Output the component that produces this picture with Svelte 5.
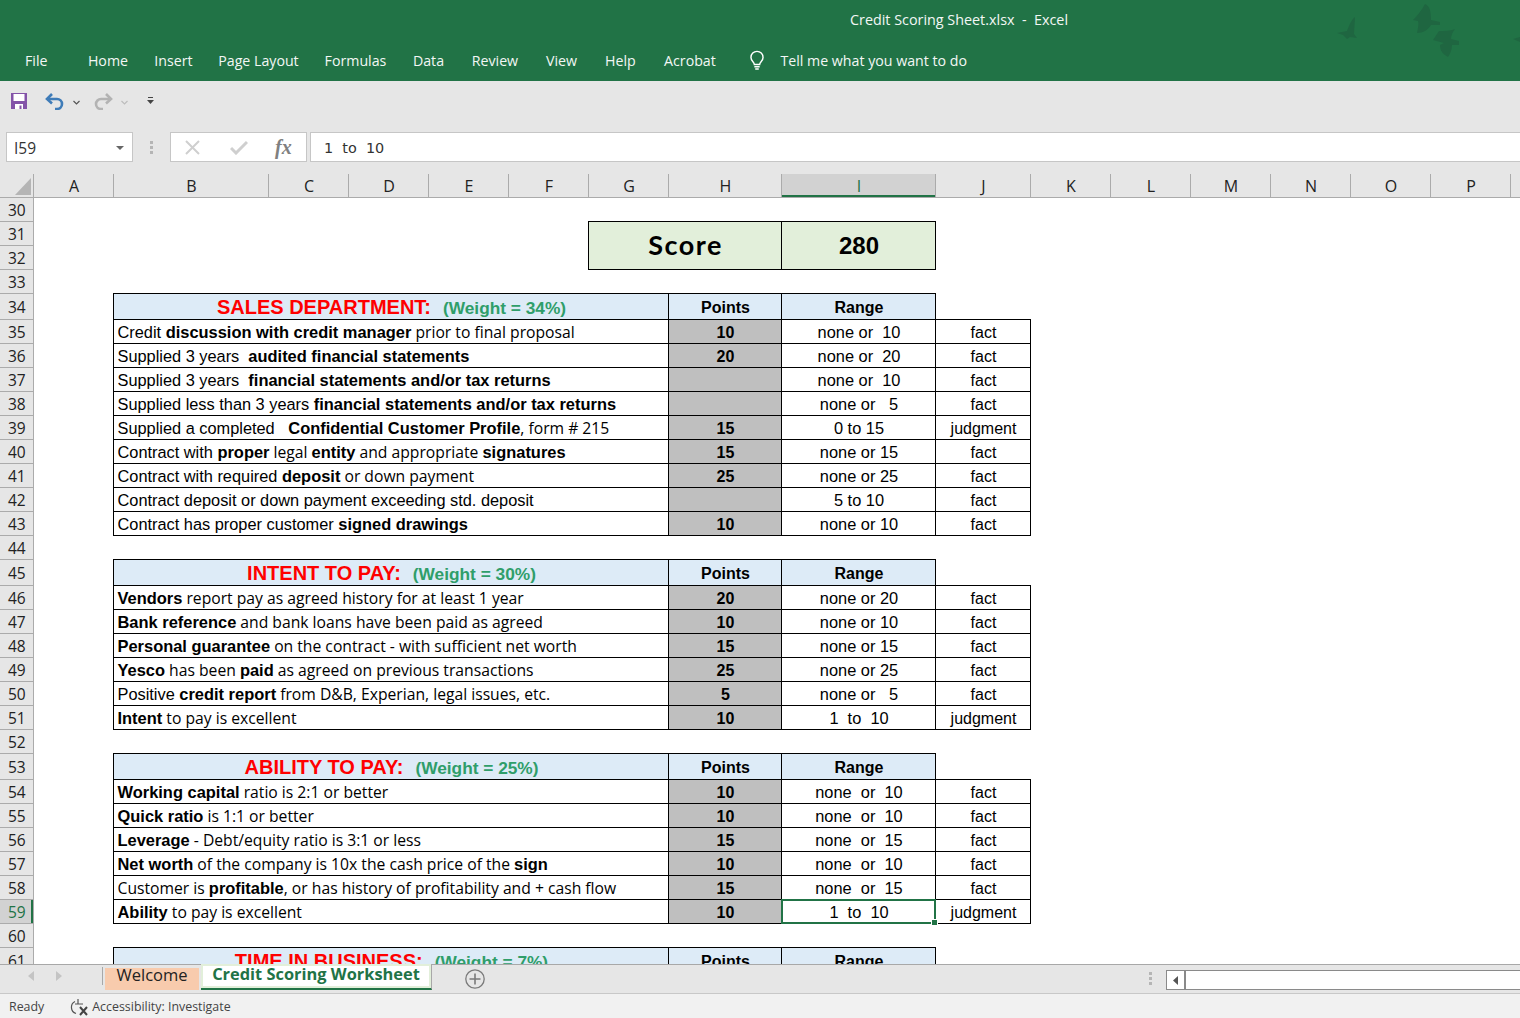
<script lang="ts">
	const ribbonTabs = [
		['Home', 41],
		['Insert', 36],
		['Page Layout', 80],
		['Formulas', 60],
		['Data', 32],
		['Review', 47],
		['View', 32],
		['Help', 32],
		['Acrobat', 53]
	];

	const colWidths = [33, 80, 155, 80, 80, 80, 80, 80, 113, 154, 95, 80, 80, 80, 80, 80, 80, 40];
	const colNames = ['A', 'B', 'C', 'D', 'E', 'F', 'G', 'H', 'I', 'J', 'K', 'L', 'M', 'N', 'O', 'P', ''];

	// a = Arial, b = Arial bold, t = the wider text face
	const sections = [
		{
			start: 34,
			title: 'SALES DEPARTMENT:',
			weight: '(Weight = 34%)',
			rows: [
				[[['a', 'Credit '], ['b', 'discussion with credit manager'], ['t', ' prior to final proposal']], '10', 'none or  10', 'fact'],
				[[['a', 'Supplied 3 years  '], ['b', 'audited financial statements']], '20', 'none or  20', 'fact'],
				[[['a', 'Supplied 3 years  '], ['b', 'financial statements and/or tax returns']], '', 'none or  10', 'fact'],
				[[['a', 'Supplied less than 3 years '], ['b', 'financial statements and/or tax returns']], '', 'none or   5', 'fact'],
				[[['a', 'Supplied a completed   '], ['b', 'Confidential Customer Profile'], ['t', ', form # 215']], '15', '0 to 15', 'judgment'],
				[[['a', 'Contract with '], ['b', 'proper'], ['t', ' legal '], ['b', 'entity'], ['t', ' and appropriate '], ['b', 'signatures']], '15', 'none or 15', 'fact'],
				[[['a', 'Contract with required '], ['b', 'deposit'], ['t', ' or down payment']], '25', 'none or 25', 'fact'],
				[[['a', 'Contract deposit or down payment exceeding std. deposit']], '', '5 to 10', 'fact'],
				[[['a', 'Contract has proper customer '], ['b', 'signed drawings']], '10', 'none or 10', 'fact']
			]
		},
		{
			start: 45,
			title: 'INTENT TO PAY:',
			weight: '(Weight = 30%)',
			rows: [
				[[['b', 'Vendors'], ['t', ' report pay as agreed history for at least 1 year']], '20', 'none or 20', 'fact'],
				[[['b', 'Bank reference'], ['t', ' and bank loans have been paid as agreed']], '10', 'none or 10', 'fact'],
				[[['b', 'Personal guarantee'], ['t', ' on the contract - with sufficient net worth']], '15', 'none or 15', 'fact'],
				[[['b', 'Yesco'], ['t', ' has been '], ['b', 'paid'], ['t', ' as agreed on previous transactions']], '25', 'none or 25', 'fact'],
				[[['a', 'Positive '], ['b', 'credit report'], ['t', ' from D&B, Experian, legal issues, etc.']], '5', 'none or   5', 'fact'],
				[[['b', 'Intent'], ['t', ' to pay is excellent']], '10', '1  to  10', 'judgment']
			]
		},
		{
			start: 53,
			title: 'ABILITY TO PAY:',
			weight: '(Weight = 25%)',
			rows: [
				[[['b', 'Working capital'], ['t', ' ratio is 2:1 or better']], '10', 'none  or  10', 'fact'],
				[[['b', 'Quick ratio'], ['t', ' is 1:1 or better']], '10', 'none  or  10', 'fact'],
				[[['b', 'Leverage'], ['t', ' - Debt/equity ratio is 3:1 or less']], '15', 'none  or  15', 'fact'],
				[[['b', 'Net worth'], ['t', ' of the company is 10x the cash price of the '], ['b', 'sign']], '10', 'none  or  10', 'fact'],
				[[['t', 'Customer is '], ['b', 'profitable'], ['t', ', or has history of profitability and + cash flow']], '15', 'none  or  15', 'fact'],
				[[['b', 'Ability'], ['t', ' to pay is excellent']], '10', '1  to  10', 'judgment']
			]
		}
	];

	const activeRow = 59;

	function headerOf(n: number) {
		return sections.find((s) => s.start === n);
	}
	function dataOf(n: number) {
		for (const s of sections) {
			const i = n - s.start - 1;
			if (i >= 0 && i < s.rows.length) return s.rows[i];
		}
		return null;
	}

	const rowNums = Array.from({ length: 32 }, (_, i) => 30 + i);
	const tallRows = [34, 45, 53, 61];
</script>

<div class="app">
	<header class="ribbon">
		<svg class="birds" width="200" height="60" viewBox="0 0 200 60">
			<g fill="#1f6641">
				<path d="M29 17C25 20 23 26 21 31L11 33l6 2 4 4 3-2 7 1-3-4z" />
				<path d="M99 4c5 2 6 8 6 16l9 2v3h-9c-3 5-8 8-14 8 1-5 2-9 1-12l-5-1c4-4 9-10 12-16z" />
				<path d="M113 31c5 0 11 0 16-2-3 4-4 7-4 10l8 2v4h-7c0 5-2 9-4 12-5-3-8-6-8-12l4-2-11-3z" />
				<path d="M187 39l7-2v5z" />
			</g>
		</svg>
		<div class="title">{'Credit Scoring Sheet.xlsx  -  Excel'}</div>
		<nav class="tabs">
			<span class="file">File</span>
			{#each ribbonTabs as [t, w]}
				<span class="tab" style="width:{w}px">{t}</span>
			{/each}
			<svg class="bulb" width="16" height="21" viewBox="0 0 18 22" fill="none" stroke="#fff" stroke-width="1.600">
				<path d="M6 15.5c0-2.5-3.8-4-3.8-8a6.800 6.800 0 0 1 13.600 0c0 4-3.800 5.500-3.800 8z" />
				<path d="M6 18h6M7 20.500h4" />
			</svg>
			<span class="tell">Tell me what you want to do</span>
		</nav>
	</header>

	<div class="qat">
		<svg class="save" width="16" height="16" viewBox="0 0 16 16">
			<path d="M0 0h16v16H0z" fill="#8353a8" />
			<path d="M2.500 1h11v7h-11z" fill="#fff" />
			<path d="M4 11h8v5H4z" fill="#fff" />
			<path d="M8.500 12.500h2V16h-2z" fill="#8353a8" />
		</svg>
		<svg class="undo" width="19" height="17" viewBox="0 0 19 17" fill="none" stroke="#3f7cb8" stroke-width="2.600">
			<path d="M2 6h10a5 5 0 0 1 0 10h-2" />
			<path d="M7 1 2 6l5 4.500" />
		</svg>
		<svg class="chev" width="7" height="5" viewBox="0 0 7 5" fill="none" stroke="#555" stroke-width="1.200"><path d="m.5 1 3 3 3-3" /></svg>
		<svg class="redo" width="19" height="17" viewBox="0 0 19 17" fill="none" stroke="#b3b3b3" stroke-width="2.600">
			<path d="M17 6H7a5 5 0 0 0 0 10h2" />
			<path d="m12 1 5 5-5 4.500" />
		</svg>
		<svg class="chev dim" width="7" height="5" viewBox="0 0 7 5" fill="none" stroke="#bdbdbd" stroke-width="1.200"><path d="m.5 1 3 3 3-3" /></svg>
		<svg class="more" width="7" height="8" viewBox="0 0 7 8"><path d="M1 0h5v1H1zM0 3h7L3.500 7z" fill="#444" /></svg>
	</div>

	<div class="formula">
		<div class="namebox">
			<span>I59</span>
			<svg width="8" height="4" viewBox="0 0 8 4"><path d="M0 0h8L4 4z" fill="#666" /></svg>
		</div>
		<div class="grip"><i></i><i></i><i></i></div>
		<div class="fxbox">
			<svg width="15" height="15" viewBox="0 0 15 15" fill="none" stroke="#cfcfcf" stroke-width="2"><path d="m1 1 13 13M14 1 1 14" /></svg>
			<svg width="18" height="15" viewBox="0 0 18 15" fill="none" stroke="#cfcfcf" stroke-width="3"><path d="m1 8 5 5L17 2" /></svg>
			<span class="fx">fx</span>
		</div>
		<div class="input">{'1  to  10'}</div>
	</div>

	<div class="sheet">
		<table>
			<colgroup>
				{#each colWidths as w}
					<col style="width:{w}px" />
				{/each}
			</colgroup>
			<thead>
				<tr>
					<th class="corner">
						<svg width="16" height="17" viewBox="0 0 16 17"><path d="M16 0v17H0z" fill="#b5b5b5" /></svg>
					</th>
					{#each colNames as c}
						<th class="colhead" class:sel={c === 'I'}>{c}</th>
					{/each}
				</tr>
			</thead>
			<tbody>
				{#each rowNums as n}
					{@const head = headerOf(n)}
					{@const data = dataOf(n)}
					<tr class:tall={tallRows.includes(n)}>
						<td class="rowhead" class:sel={n === activeRow}>{n}</td>
						{#if n === 31}
							<td colspan="6"></td>
							<td rowspan="2" colspan="2" class="score big">Score</td>
							<td rowspan="2" class="score num">280</td>
							<td colspan="8"></td>
						{:else if n === 32}
							<td colspan="6"></td>
							<td colspan="8"></td>
						{:else if head || n === 61}
							<td></td>
							<td colspan="6" class="line head">
								<span class="sec">{head ? head.title : 'TIME IN BUSINESS:'}</span><span class="wt">{head ? head.weight : '(Weight = 7%)'}</span>
							</td>
							<td class="line head hb">Points</td>
							<td class="line head hb">Range</td>
							<td colspan="8"></td>
						{:else if data}
							<td></td>
							<td colspan="6" class="line desc">{#each data[0] as [k, text]}<span class={k}>{text}</span>{/each}</td>
							<td class="line pts">{data[1]}</td>
							<td class="line range" class:active={n === activeRow}>{data[2]}{#if n === activeRow}<span class="cursor"><i></i></span>{/if}</td>
							<td class="line mid">{data[3]}</td>
							<td colspan="7"></td>
						{:else}
							<td colspan="17"></td>
						{/if}
					</tr>
				{/each}
			</tbody>
		</table>
	</div>

	<div class="tabbar">
		<div class="nav">
			<svg width="6" height="10" viewBox="0 0 6 10"><path d="M6 0v10L0 5z" fill="#c4c4c4" /></svg>
			<svg width="6" height="10" viewBox="0 0 6 10"><path d="M0 0v10l6-5z" fill="#c4c4c4" /></svg>
		</div>
		<div class="sheettab welcome">Welcome</div>
		<div class="sheettab current">Credit Scoring Worksheet</div>
		<svg class="plus" width="20" height="20" viewBox="0 0 20 20" fill="none" stroke="#7a7a7a" stroke-width="1.300">
			<circle cx="10" cy="10" r="9.200" />
			<path d="M10 4.500v11M4.500 10h11" stroke-width="1.600" />
		</svg>
		<div class="grip tabgrip"><i></i><i></i><i></i></div>
		<div class="hscroll">
			<span class="left"><svg width="5" height="9" viewBox="0 0 5 9"><path d="M5 0v9L0 4.500z" fill="#555" /></svg></span>
			<span class="thumb"></span>
		</div>
	</div>

	<footer class="status">
		<span>Ready</span>
		<svg class="a11y" width="20" height="18" viewBox="0 0 20 18" fill="none" stroke="#555" stroke-width="1.200">
			<path d="M6 3.500a6.500 6.500 0 0 0 1 12" />
			<path d="M9 1v5l-3 0M9 6l5 0" />
			<path d="m11 9 7 8M18 9l-7 8" stroke-width="2" stroke="#444" />
		</svg>
		<span>Accessibility: Investigate</span>
	</footer>
</div>

<style>
	:global(body) {
		margin: 0;
		overflow: hidden;
	}

	.app {
		height: 1018px;
		display: flex;
		flex-direction: column;
		background: #e6e6e6;
		font-family: 'Open Sans', sans-serif;
		overflow: hidden;
	}

	.ribbon {
		position: relative;
		height: 81px;
		background: #217346;
		color: #fff;
		flex: none;
	}

	.birds {
		position: absolute;
		top: 0;
		left: 1326px;
	}

	.title {
		height: 40px;
		line-height: 40px;
		padding-left: 850px;
		font-size: 14.35px;
		white-space: pre;
		color: #f3f7f5;
	}

	.tabs {
		display: flex;
		align-items: center;
		gap: 27px;
		height: 41px;
		padding-left: 25px;
		font-size: 14.2px;
		color: #f3f7f5;
	}

	.file {
		margin-right: 13px;
	}

	.tab {
		display: flex;
		justify-content: center;
		white-space: nowrap;
	}

	.bulb {
		margin: 0 -12px 0 6px;
	}

	.qat {
		flex: none;
		height: 41px;
		display: flex;
		align-items: flex-start;
		padding: 12px 0 0 11px;
		box-sizing: border-box;
	}

	.undo {
		margin-left: 18px;
	}

	.chev {
		margin: 7px 0 0 9px;
	}

	.redo {
		margin-left: 14px;
	}

	.chev.dim {
		margin-left: 8px;
	}

	.more {
		margin: 4px 0 0 19px;
	}

	.formula {
		flex: none;
		height: 30px;
		margin: 10px 0 12px;
		display: flex;
		font-size: 15.5px;
		color: #333;
	}

	.namebox,
	.fxbox,
	.input {
		background: #fff;
		border: 1px solid #c6c6c6;
		box-sizing: border-box;
		display: flex;
		align-items: center;
	}

	.namebox {
		width: 127px;
		margin-left: 6px;
		padding: 1px 8px 0 7px;
		justify-content: space-between;
	}

	.grip {
		width: 37px;
		display: flex;
		flex-direction: column;
		align-items: center;
		justify-content: center;
		gap: 2px;
	}

	.grip i {
		width: 3px;
		height: 3px;
		background: #b5b5b5;
	}

	.fxbox {
		width: 137px;
		padding-left: 14px;
		gap: 30px;
	}

	.fx {
		margin-left: -3px;
		font-family: 'Liberation Serif', serif;
		font-style: italic;
		font-weight: bold;
		font-size: 20px;
		color: #808080;
	}

	.input {
		flex: 1;
		margin: 0 -2px 0 3px;
		padding: 1px 0 0 13px;
		font-family: 'DejaVu Sans', sans-serif;
		font-size: 14.4px;
		white-space: pre;
	}

	.sheet {
		flex: 1;
		min-height: 0;
		overflow: hidden;
		background: #fff;
	}

	table {
		table-layout: fixed;
		border-collapse: collapse;
		width: 1550px;
		font-family: 'Liberation Sans', Arial, sans-serif;
		font-size: 16px;
		color: #000;
	}

	th,
	td {
		padding: 2px 0 0;
		height: 24px;
		box-sizing: border-box;
		line-height: 1;
		white-space: pre;
		overflow: hidden;
	}

	th {
		height: 23px;
	}

	tr.tall td {
		height: 26px;
	}

	.corner {
		padding: 0;
		background: #e6e6e6;
		border-right: 1px solid #ababab;
		border-bottom: 1px solid #ababab;
		text-align: right;
		vertical-align: bottom;
	}

	.corner svg {
		display: block;
		margin: 0 2px 2px auto;
	}

	.colhead {
		padding-left: 2px;
		background: #e6e6e6;
		border-right: 1px solid #ababab;
		border-bottom: 1px solid #ababab;
		font-family: 'Open Sans', sans-serif;
		font-weight: 400;
		font-size: 16px;
		color: #222;
	}

	.colhead.sel {
		background: #d2d2d2;
		color: #217346;
		box-shadow: inset 0 -2px 0 #217346;
	}

	.rowhead {
		padding: 4px 0 0 1px;
		background: #e6e6e6;
		border-right: 1px solid #ababab;
		border-bottom: 1px solid #ababab;
		font-family: 'Open Sans', sans-serif;
		font-size: 15.5px;
		color: #222;
		text-align: center;
	}

	.rowhead.sel {
		background: #d2d2d2;
		color: #217346;
		box-shadow: inset -2px 0 0 #217346;
	}

	.line {
		border: 1px solid #000;
	}

	.head {
		background: #ddebf7;
		text-align: center;
		padding-left: 2px;
	}

	.hb {
		padding-top: 4px;
		font-weight: bold;
	}

	.sec {
		color: #f00;
		font-weight: bold;
		font-size: 20px;
	}

	.wt {
		margin-left: 12px;
		color: #2f9e6a;
		font-weight: bold;
		font-size: 17.3px;
	}

	.score {
		padding: 0 0 0 2px;
		border: 1px solid #000;
		background: #e2efda;
		text-align: center;
		font-weight: bold;
	}

	.big {
		padding-bottom: 2px;
		font-family: 'Lato', sans-serif;
		font-size: 27px;
		letter-spacing: 1.5px;
	}

	.num {
		padding-top: 2px;
		font-size: 24px;
	}

	.desc {
		padding-left: 4px;
	}

	.a {
		font-size: 16.35px;
	}

	.b {
		font-weight: bold;
		font-size: 16.45px;
	}

	.t {
		font-family: 'Open Sans', sans-serif;
		font-size: 15.7px;
	}

	.pts {
		padding: 4px 0 0 2px;
		background: #bfbfbf;
		text-align: center;
		font-weight: bold;
	}

	.mid {
		padding: 4px 0 0 2px;
		text-align: center;
	}

	.range {
		padding-left: 2px;
		text-align: center;
		font-size: 16.4px;
	}

	.active {
		position: relative;
		overflow: visible;
	}

	.cursor {
		position: absolute;
		inset: -1px;
		border: 2px solid #217346;
	}

	.cursor i {
		position: absolute;
		right: -4px;
		bottom: -4px;
		width: 5px;
		height: 5px;
		background: #217346;
		border: 1px solid #fff;
	}

	.tabbar {
		position: relative;
		flex: none;
		height: 29px;
		display: flex;
		background: #e6e6e6;
		border-top: 1px solid #a8a8a8;
		box-sizing: border-box;
		font-size: 16.5px;
	}

	.nav {
		width: 103px;
		box-sizing: border-box;
		display: flex;
		align-items: center;
		gap: 22px;
		padding-left: 28px;
		border-right: 1px solid #a8a8a8;
		margin: 2px 0 8px;
	}

	.sheettab {
		display: flex;
		align-items: center;
		justify-content: center;
		box-sizing: border-box;
	}

	.welcome {
		width: 94px;
		height: 22px;
		margin: 3px 0 0 2px;
		padding-bottom: 9px;
		background: #f8cbad;
		color: #222;
	}

	.current {
		width: 231px;
		height: 26px;
		margin: -1px 0 0 2px;
		padding-bottom: 6px;
		background: #fff;
		color: #217346;
		font-weight: 700;
		font-size: 16.4px;
		border-right: 1px solid #a8a8a8;
		border-bottom: 2px solid #217346;
		box-shadow: inset 0 0 0 2px #e2efda;
	}

	.plus {
		margin: 4px 0 0 33px;
	}

	.tabgrip {
		width: 8px;
		margin-left: 661px;
		margin-bottom: 1px;
	}

	.hscroll {
		display: flex;
		height: 18px;
		margin: 5px 0 0 12px;
		flex: 1;
		background: #fff;
		border: 1px solid #8a8a8a;
		border-right: none;
	}

	.left {
		width: 17px;
		display: flex;
		align-items: center;
		justify-content: center;
		border-right: 2px solid #8a8a8a;
	}

	.status {
		flex: none;
		height: 25px;
		display: flex;
		align-items: center;
		background: #f1f1f1;
		border-top: 1px solid #c8c8c8;
		box-sizing: border-box;
		padding: 1px 0 0 9px;
		font-size: 12.4px;
		color: #444;
	}

	.a11y {
		margin: 0 3px 0 25px;
	}
</style>
